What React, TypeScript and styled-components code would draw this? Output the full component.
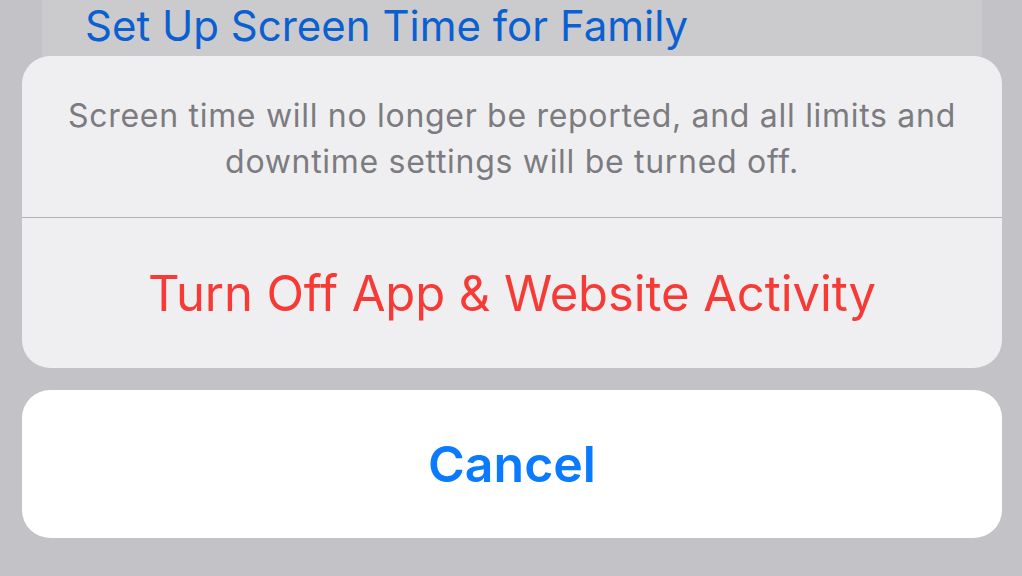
import styled, { createGlobalStyle } from "styled-components";

const GlobalStyle = createGlobalStyle`
  html, body {
    margin: 0;
    padding: 0;
    background: #c3c2c7;
  }
  body {
    font-family: Inter, "Noto Sans", "Liberation Sans", sans-serif;
  }
`;

const App = () => {
  return (
    <>
      <GlobalStyle />
      <Screen>
        <BackPanel>
          <BackLink>Set Up Screen Time for Family</BackLink>
        </BackPanel>
        <SheetGroup>
          <Sheet>
            <Message>
              Screen time will no longer be reported, and all limits and
              <br />
              downtime settings will be turned off.
            </Message>
            <ActionButton $tone="destructive">
              Turn Off App &amp; Website Activity
            </ActionButton>
          </Sheet>
          <CancelCard>
            <ActionButton $tone="cancel">Cancel</ActionButton>
          </CancelCard>
        </SheetGroup>
      </Screen>
    </>
  );
};

const Screen = styled.div`
  display: flex;
  flex-direction: column;
  width: 1022px;
  height: 576px;
  overflow: hidden;
  background: #c3c2c7;
`;

const BackPanel = styled.div`
  display: flex;
  align-items: flex-start;
  height: 56px;
  margin: 0 40px 0 42px;
  padding-left: 43px;
  background: #cbcbcd;
  box-sizing: border-box;
`;

const BackLink = styled.span`
  margin-top: 0;
  font-size: 42px;
  line-height: 52px;
  color: #0b60d1;
  letter-spacing: 0;
  white-space: nowrap;
`;

const SheetGroup = styled.div`
  display: flex;
  flex-direction: column;
  gap: 22px;
  padding: 0 20px 0 22px;
`;

const Sheet = styled.div`
  display: flex;
  flex-direction: column;
  background: #efeff1;
  border-radius: 28px;
  overflow: hidden;
`;

const Message = styled.div`
  display: flex;
  align-items: center;
  justify-content: center;
  height: 162px;
  padding-top: 4px;
  box-sizing: border-box;
  border-bottom: 1px solid #b2b2b4;
  text-align: center;
  font-size: 32px;
  line-height: 46px;
  letter-spacing: 0.7px;
  color: #7c7c80;
`;

const ActionButton = styled.div<{ $tone: "destructive" | "cancel" }>`
  display: flex;
  align-items: center;
  justify-content: center;
  height: ${(p) => (p.$tone === "cancel" ? "148px" : "150px")};
  font-size: ${(p) => (p.$tone === "cancel" ? "50px" : "49px")};
  font-weight: ${(p) => (p.$tone === "cancel" ? 600 : 400)};
  letter-spacing: ${(p) => (p.$tone === "cancel" ? "0" : "-0.1px")};
  color: ${(p) => (p.$tone === "cancel" ? "#0a7aff" : "#f63a35")};
  white-space: nowrap;
`;

const CancelCard = styled.div`
  background: #ffffff;
  border-radius: 28px;
`;

export default App;
